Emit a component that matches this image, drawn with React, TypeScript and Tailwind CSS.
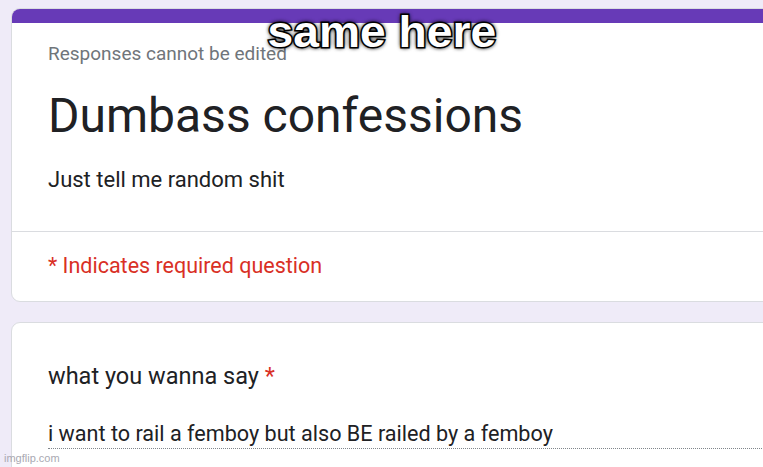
import React from 'react';

const roboto = { fontFamily: 'Roboto, "Noto Sans", sans-serif' };

export default function App() {
  return (
    <div
      className="relative w-[763px] h-[467px] overflow-hidden bg-[#efebf8]"
      style={roboto}
    >
      <div className="flex flex-col gap-[20px] pl-[11px] pt-[8px]">
        {/* header card */}
        <div className="w-[800px] rounded-[9px] bg-white border border-[#dadce0] overflow-hidden">
          <div className="h-[14px] bg-[#673ab7]" />
          <div className="pl-[36px] pt-[19px] pb-[37px]">
            <p className="text-[19px] leading-[24px] text-[#70757a]">Responses cannot be edited</p>
            <h1 className="mt-[22px] text-[48px] leading-[56px] text-[#202124]">Dumbass confessions</h1>
            <p className="mt-[22px] text-[22px] leading-[28px] text-[#202124]">Just tell me random shit</p>
          </div>
          <div className="border-t border-[#dadce0] pl-[36px] pt-[20px] pb-[21px]">
            <p className="text-[21.5px] leading-[28px] text-[#d93025]">* Indicates required question</p>
          </div>
        </div>

        {/* question card */}
        <div className="w-[800px] h-[200px] rounded-[9px] bg-white border border-[#dadce0]">
          <div className="pl-[36px] pt-[38px]">
            <p className="text-[23.5px] leading-[30px] text-[#202124]">
              what you wanna say <span className="text-[#d93025]">*</span>
            </p>
            <div className="mt-[29px] border-b border-dotted border-[#80868b]">
              <p className="text-[21.6px] leading-[28px] text-[#202124]">
                i want to rail a femboy but also BE railed by a femboy
              </p>
            </div>
          </div>
        </div>
      </div>

      {/* meme caption */}
      <div className="absolute left-0 right-0 top-[7px] flex justify-center">
        <div
          className="scale-x-[1.05] text-[44px] leading-[50px] font-bold text-white"
          style={{
            fontFamily: '"Liberation Sans", Arial, sans-serif',
            WebkitTextStroke: '3px black',
            paintOrder: 'stroke fill',
            textShadow: '0 0 4px #000, 0 0 5px #000',
          }}
        >
          same here
        </div>
      </div>

      {/* watermark */}
      <div
        className="absolute left-[4px] bottom-[2px] text-[11px] leading-[14px] text-[#a9a9b2]"
        style={{ fontFamily: '"Liberation Sans", Arial, sans-serif' }}
      >
        imgflip.com
      </div>
    </div>
  );
}
